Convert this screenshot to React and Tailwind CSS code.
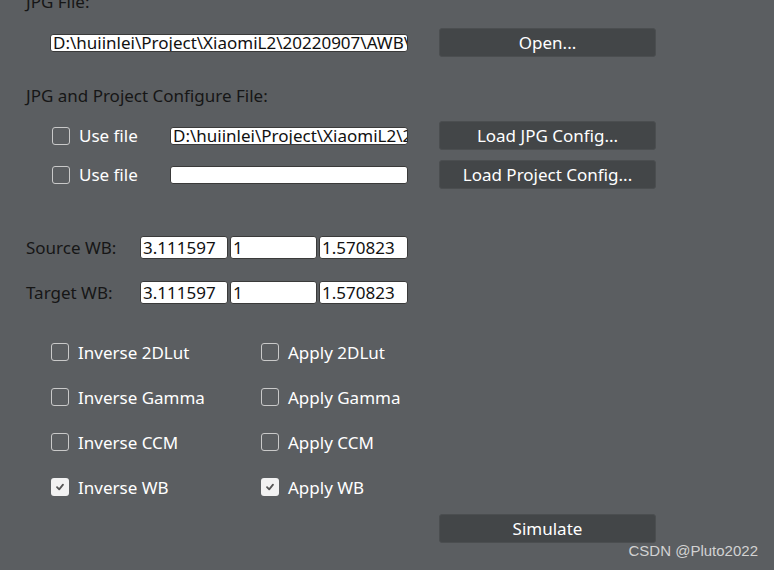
import React from 'react';

const font = { fontFamily: '"Noto Sans", "Open Sans", sans-serif' };

const Button = ({ children }) => (
  <button className="w-[217px] h-[29px] rounded-[3px] bg-[#434648] border border-[#4b4e50] text-white text-[17px] leading-none flex items-center justify-center">
    {children}
  </button>
);

const TextBox = ({ value, className }) => (
  <div className={`h-[18px] bg-white border border-[#3a3a3a] rounded-[3px] overflow-hidden whitespace-nowrap text-[#111] text-[17px] leading-[16px] pl-[2px] ${className}`}>
    {value}
  </div>
);

const Check = ({ checked, label }) => (
  <div className="flex items-center h-[24px]">
    {checked ? (
      <span className="w-[18px] h-[18px] rounded-[3px] bg-[#f2f2f2] flex items-center justify-center">
        <svg width="10" height="10" viewBox="0 0 10 10">
          <path d="M2 5.2 L4.2 7.4 L8 2.6" stroke="#555" strokeWidth="1.8" fill="none" strokeLinecap="round" strokeLinejoin="round" />
        </svg>
      </span>
    ) : (
      <span className="w-[18px] h-[18px] rounded-[3px] border-[1.5px] border-[#c9c9c9]" />
    )}
    <span className="ml-[9px] text-white text-[17px] leading-none">{label}</span>
  </div>
);

const WbRow = ({ label, values }) => (
  <div className="flex items-center h-[23px]">
    <span className="w-[114px] text-[#161616] text-[17px] leading-none">{label}</span>
    <div className="flex gap-[2px]">
      <TextBox value={values[0]} className="w-[88px] h-[23px] leading-[21px]" />
      <TextBox value={values[1]} className="w-[87px] h-[23px] leading-[21px]" />
      <TextBox value={values[2]} className="w-[89px] h-[23px] leading-[21px]" />
    </div>
  </div>
);

export default function App() {
  const wb = ['3.111597', '1', '1.570823'];
  const flags = [
    ['Inverse 2DLut', 'Apply 2DLut', false],
    ['Inverse Gamma', 'Apply Gamma', false],
    ['Inverse CCM', 'Apply CCM', false],
    ['Inverse WB', 'Apply WB', true],
  ];

  return (
    <div className="w-[774px] h-[570px] bg-[#5b5e61] overflow-hidden relative pl-[26px]" style={font}>
      <div className="h-[24px] -mt-[10px] flex items-center text-[#161616] text-[17px]">JPG File:</div>

      <div className="mt-[14px] h-[29px] flex items-center">
        <TextBox value="D:\huiinlei\Project\XiaomiL2\20220907\AWB\IMG_0001.jpg" className="ml-[24px] w-[358px]" />
        <div className="ml-[31px]"><Button>Open...</Button></div>
      </div>

      <div className="mt-[27px] h-[24px] flex items-center text-[#161616] text-[17px]">JPG and Project Configure File:</div>

      <div className="mt-[13px] h-[29px] flex items-center">
        <div className="ml-[26px] w-[118px]"><Check label="Use file" /></div>
        <TextBox value="D:\huiinlei\Project\XiaomiL2\20220907\AWB\config.json" className="w-[238px] h-[17px]" />
        <div className="ml-[31px]"><Button>Load JPG Config...</Button></div>
      </div>

      <div className="mt-[10px] h-[29px] flex items-center">
        <div className="ml-[26px] w-[118px]"><Check label="Use file" /></div>
        <TextBox value="" className="w-[238px] h-[17px]" />
        <div className="ml-[31px]"><Button>Load Project Config...</Button></div>
      </div>

      <div className="mt-[47px]"><WbRow label="Source WB:" values={wb} /></div>
      <div className="mt-[22px]"><WbRow label="Target WB:" values={wb} /></div>

      <div className="mt-[36px] ml-[25px] grid grid-cols-[210px_1fr] gap-y-[21px]">
        {flags.map(([a, b, c]) => (
          <React.Fragment key={a}>
            <Check label={a} checked={c} />
            <Check label={b} checked={c} />
          </React.Fragment>
        ))}
      </div>

      <div className="mt-[15px] ml-[413px]"><Button>Simulate</Button></div>

      <div className="absolute right-[16px] bottom-[8px] text-[#d2d2d2] text-[15px]" style={{ fontFamily: '"Liberation Sans", sans-serif' }}>
        CSDN @Pluto2022
      </div>
    </div>
  );
}
